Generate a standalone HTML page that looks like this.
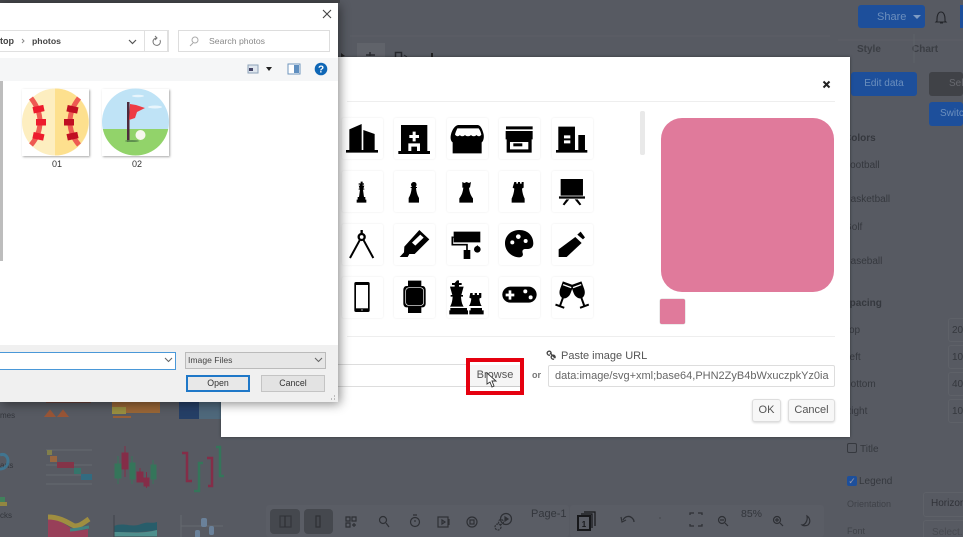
<!DOCTYPE html>
<html><head><meta charset="utf-8"><style>
html,body{margin:0;padding:0}
body{width:963px;height:537px;overflow:hidden;position:relative;background:#575a62;font-family:"Liberation Sans",sans-serif}
.a{position:absolute;white-space:nowrap;box-sizing:border-box}
#wrap{position:absolute;left:0;top:0;width:963px;height:537px;overflow:hidden;filter:blur(.35px)}
.bg{color:#35383e;font-size:10px}
.cell{position:absolute;width:41px;height:41px;background:#fff;border-radius:2px;box-shadow:0 0 2px rgba(0,0,0,.08)}
.btn{position:absolute;box-sizing:border-box;background:#f7f7f7;border:1px solid #ddd;border-radius:3px;box-shadow:0 1px 2px rgba(0,0,0,.15);color:#555;font-size:11px;text-align:center}
</style></head><body><div id="wrap">

<!-- background app -->
<div class="a" style="left:858px;top:5px;width:67px;height:23px;background:#1d4f9b;border-radius:3px;color:#6c8fbd;font-size:11px;line-height:24px;padding-left:19px">Share</div>
<div class="a" style="left:913px;top:15px;width:0;height:0;border:4px solid transparent;border-top-color:#7e9cc4"></div>
<div class="a" style="left:960px;top:5px;width:3px;height:23px;background:#1d4f9b"></div>
<div class="a bg" style="left:857px;top:44px;font-weight:bold;color:#3b3e44">Style</div>
<div class="a bg" style="left:912px;top:44px;font-weight:bold;color:#3b3e44">Chart</div>
<div class="a" style="left:851px;top:72px;width:66px;height:24px;background:#1d4f9b;border-radius:3px;color:#6c8fbd;font-size:10px;line-height:24px;text-align:center">Edit data</div>
<div class="a" style="left:929px;top:72px;width:34px;height:24px;background:#404247;border-radius:3px;color:#686a70;font-size:10px;line-height:24px;padding-left:20px">Sel</div>
<div class="a" style="left:929px;top:102px;width:34px;height:24px;background:#1d4f9b;border-radius:3px;color:#6c8fbd;font-size:10px;line-height:24px;padding-left:11px">Switch</div>
<div class="a bg" style="left:844px;top:133px;font-weight:bold">Colors</div>
<div class="a bg" style="left:844px;top:160px">Football</div>
<div class="a bg" style="left:844px;top:194px">Basketball</div>
<div class="a bg" style="left:844px;top:222px">Golf</div>
<div class="a bg" style="left:844px;top:256px">Baseball</div>
<div class="a bg" style="left:843px;top:298px;font-weight:bold">Spacing</div>
<div class="a bg" style="left:844px;top:325px">Top</div>
<div class="a bg" style="left:844px;top:352px">Left</div>
<div class="a bg" style="left:844px;top:379px">Bottom</div>
<div class="a bg" style="left:844px;top:406px">Right</div>
<div class="a bg" style="left:952px;top:325px">20</div>
<div class="a bg" style="left:952px;top:352px">10</div>
<div class="a bg" style="left:952px;top:379px">40</div>
<div class="a bg" style="left:952px;top:406px">10</div>
<div class="a" style="left:948px;top:318px;width:20px;height:24px;border:1px solid #5e6168;border-radius:3px"></div>
<div class="a" style="left:948px;top:345px;width:20px;height:24px;border:1px solid #5e6168;border-radius:3px"></div>
<div class="a" style="left:948px;top:372px;width:20px;height:24px;border:1px solid #5e6168;border-radius:3px"></div>
<div class="a" style="left:948px;top:399px;width:20px;height:24px;border:1px solid #5e6168;border-radius:3px"></div>
<div class="a" style="left:847px;top:443px;width:10px;height:10px;border:1px solid #36393f;border-radius:2px"></div>
<div class="a bg" style="left:860px;top:444px">Title</div>
<div class="a" style="left:847px;top:476px;width:10px;height:10px;background:#1d4f9b;border-radius:2px;color:#99a;font-size:9px;line-height:10px;text-align:center">✓</div>
<div class="a bg" style="left:859px;top:476px">Legend</div>
<div class="a bg" style="left:847px;top:499px;color:#3f4248;font-size:9px">Orientation</div>
<div class="a bg" style="left:931px;top:498px;color:#303238">Horizontal</div>
<div class="a bg" style="left:847px;top:526px;color:#3f4248;font-size:9px">Font</div>
<div class="a bg" style="left:932px;top:527px;color:#474a50">Select...</div>
<div class="a" style="left:923px;top:492px;width:50px;height:25px;border:1px solid #5e6168;border-radius:3px"></div>
<div class="a" style="left:923px;top:520px;width:50px;height:25px;border:1px solid #5e6168;border-radius:3px"></div>
<div class="a bg" style="left:0;top:411px;color:#33363c;font-size:8px">mes</div>
<div class="a bg" style="left:0;top:461px;color:#33363c;font-size:8px">arts</div>
<div class="a bg" style="left:0;top:511px;color:#33363c;font-size:8px">cks</div>
<div class="a" style="left:266px;top:505px;width:303px;height:32px;background:#5a5d65;border-radius:3px"></div>
<div class="a" style="left:570px;top:505px;width:254px;height:32px;background:#5a5d65;border-radius:3px"></div>
<div class="a" style="left:270px;top:509px;width:30px;height:25px;background:#45484e;border-radius:4px"></div>
<div class="a" style="left:304px;top:509px;width:29px;height:25px;background:#45484e;border-radius:4px"></div>
<div class="a" style="left:531px;top:508px;font-size:11px;color:#33363c">Page-1</div>
<div class="a" style="left:741px;top:508px;font-size:10.5px;color:#33363c">85%</div>

<svg class="a" style="left:0;top:0" width="963" height="537" viewBox="0 0 963 537">
 <!-- bell -->
 <path d="M937 21v-2c0-3 1-7 4-7s4 4 4 7v2l1 1h-10z" fill="none" stroke="#23252a" stroke-width="1.1"/><path d="M940 23h3" stroke="#23252a"/>
 <path d="M350 36H830M838 40H963" stroke="#5e6168" stroke-width="1" opacity=".7"/>
 <path d="M914 34v29" stroke="#5e6168"/>
 <!-- top toolbar bits -->
 <rect x="357" y="43" width="28" height="14" fill="#60636a"/>
 <path d="M366 55h9M370 52v4" stroke="#2a2c31" stroke-width="1.5"/>
 <path d="M341 57v-4l4 3z" fill="#222"/>
 <rect x="395.500" y="52.500" width="6" height="6" fill="none" stroke="#26282d" stroke-width="1.500"/><path d="M404 55l3 2" stroke="#26282d"/>
 <rect x="431" y="53" width="2" height="5" fill="#222"/>
 <!-- chart thumbnails -->
 <g opacity=".82">
  <path d="M46 416l4-5 4 5zM59 416l4-5 4 5z" fill="#a8552e" stroke="#a8552e" stroke-width="2"/>
  <rect x="46" y="401" width="45" height="2" fill="#6b3d33"/>
  <rect x="112" y="400" width="48" height="13" fill="#a86a2e"/><rect x="112" y="407" width="14" height="7" fill="#a89a3a"/><rect x="113" y="416" width="18" height="2" fill="#a8602e"/>
  <rect x="179" y="401" width="20" height="18" fill="#1c3a68"/><rect x="199" y="401" width="22" height="18" fill="#4e6c82"/>
  <path d="M46 450h46M46 465h46M46 475h46M46 484h46" stroke="#6a6d74"/>
  <rect x="47" y="450" width="5" height="5" fill="#8c8848"/><rect x="50" y="456" width="7" height="6" fill="#a8693a"/><rect x="57" y="462" width="17" height="6" fill="#8f2d44"/><rect x="74" y="468" width="7" height="6" fill="#2f7c6e"/><rect x="81" y="474" width="11" height="6" fill="#2b6f88"/>
  <g fill="#8f2444" stroke="#8f2444"><path d="M125 446v31" /><rect x="122" y="453" width="6" height="16"/><rect x="137" y="472" width="6" height="10"/><path d="M140 468v14"/><rect x="144" y="478" width="5" height="8"/><path d="M146.500 472v16"/></g>
  <g fill="#2f7c5a" stroke="#2f7c5a"><path d="M118 456v28M132 456v28M153 460v24"/><rect x="115" y="464" width="6" height="14"/><rect x="130" y="463" width="5" height="16"/><rect x="151" y="465" width="5" height="14"/></g>
  <path d="M182 453h5v28h5M207 458h5v28h-4" fill="none" stroke="#8f2444" stroke-width="2.5"/><path d="M203 463h-4v28h-5M216 447h4v29h4" fill="none" stroke="#2f7c5a" stroke-width="2.5"/>
  <path d="M48 519c20 0 20 16 40 10v20H48z" fill="#a83a58"/><path d="M48 517c15 0 24 9 27 9 5 0 8-3 14-7" fill="none" stroke="#b09a3a" stroke-width="5"/><path d="M70 530c6 0 12-2 19-3" fill="none" stroke="#3f8d88" stroke-width="3"/>
  <path d="M114 526c10-4 18 2 27-2 8-3 10 0 16-2v8c-16 3-28 2-43 2z" fill="#1f5f6d"/><path d="M114 532c15 0 28 2 43-2v8h-43z" fill="#4d9b98"/><path d="M114 515v22M114 537h43" stroke="#3b3f45"/>
  <path d="M181 515v22M181 526h42" stroke="#6a6d74"/><rect x="201" y="518" width="6" height="9" rx="2" fill="#6f8aa8"/><rect x="209" y="526" width="5" height="9" rx="2" fill="#6f8aa8"/><rect x="195" y="530" width="5" height="8" rx="2" fill="#6f8aa8"/>
  <path d="M0 455c5-2 8 2 8 6s-3 8-8 8" fill="none" stroke="#3d7c9c" stroke-width="3"/><rect x="0" y="497" width="5" height="5" fill="#3e8a5c"/><rect x="0" y="502" width="7" height="4" fill="#a0913b"/>
 </g>
 <!-- bottom toolbar icons -->
 <g fill="none" stroke="#2e3035" stroke-width="1.2">
  <rect x="280" y="516" width="11" height="11" stroke="#33363b"/><path d="M285 516v11"/><rect x="316" y="516" width="4" height="11"/>
  <path d="M346 517h4v4h-4zM352 517h4v4h-4zM346 523h4v4h-4zM352 525h4M354 523v4"/>
  <circle cx="383" cy="520" r="3.5"/><path d="M386 523l3 4"/>
  <circle cx="415" cy="522" r="4.5"/><path d="M413 515h4M415 520v2"/>
  <rect x="438" y="517" width="10" height="10"/><path d="M442 520l3 2-3 2z"/><path d="M449 519v6"/>
  <circle cx="472" cy="522" r="5"/><rect x="470" y="520" width="4" height="4"/>
  <circle cx="506" cy="519" r="5.5"/><path d="M505 517l3 2-3 2z" fill="#2e3035"/><circle cx="498" cy="527" r="3" stroke-dasharray="2 1"/><circle cx="501" cy="522" r="2.5" stroke-dasharray="2 1"/>
  <rect x="578" y="516" width="12" height="14" stroke-width="2" stroke="#17181b"/><path d="M581 514h11v14M584 512h11v14" stroke="#17181b"/>
  <path d="M623 520c2-4 7-5 10-1 1 1 1 3 1 3" stroke-width="1.3"/><path d="M621 517l1 5 4-2" />
  <path d="M690 515v-2h4M698 513h4v2M690 524v2h4M698 526h4v-2" stroke-width="1.3"/>
  <circle cx="722" cy="520" r="3.5"/><path d="M725 523l3 3M720 520h4"/>
  <circle cx="777" cy="520" r="3.5"/><path d="M780 523l3 3M775 520h4M777 518v4"/>
  <path d="M807 516c3 2 4 6 1 9-2 1-5 1-6 0 3 0 6-4 5-9z"/>
 </g>
 <text x="584" y="527" font-size="8" font-weight="bold" text-anchor="middle" fill="#17181b" font-family="Liberation Sans">1</text>
 <rect x="659" y="517" width="2" height="2" fill="#4f5258"/>
</svg>

<!-- modal -->
<div class="a" style="left:221px;top:57px;width:629px;height:380px;background:#fff;box-shadow:0 0 3px rgba(0,0,0,.4)"></div>
<div class="a" style="left:347px;top:101px;width:488px;height:1px;background:#eee"></div>
<div class="a" style="left:347px;top:336px;width:488px;height:1px;background:#eee"></div>
<div class="a" style="left:640px;top:111px;width:5px;height:44px;background:#e9e9e9;border-radius:2px"></div>
<div class="a" style="left:661px;top:118px;width:173px;height:174px;background:#e07a9b;border-radius:21px"></div>
<div class="a" style="left:660px;top:299px;width:25px;height:25px;background:#e07a9b;border-radius:2px;box-shadow:0 0 1px #888"></div>

<div class="cell" style="left:342px;top:118px"></div><div class="cell" style="left:394px;top:118px"></div><div class="cell" style="left:447px;top:118px"></div><div class="cell" style="left:499px;top:118px"></div><div class="cell" style="left:552px;top:118px"></div>
<div class="cell" style="left:342px;top:171px"></div><div class="cell" style="left:394px;top:171px"></div><div class="cell" style="left:447px;top:171px"></div><div class="cell" style="left:499px;top:171px"></div><div class="cell" style="left:552px;top:171px"></div>
<div class="cell" style="left:342px;top:224px"></div><div class="cell" style="left:394px;top:224px"></div><div class="cell" style="left:447px;top:224px"></div><div class="cell" style="left:499px;top:224px"></div><div class="cell" style="left:552px;top:224px"></div>
<div class="cell" style="left:342px;top:277px"></div><div class="cell" style="left:394px;top:277px"></div><div class="cell" style="left:447px;top:277px"></div><div class="cell" style="left:499px;top:277px"></div><div class="cell" style="left:552px;top:277px"></div>

<svg class="a" style="left:0;top:0" width="963" height="537" viewBox="0 0 963 537">
<g transform="translate(340 110) scale(.3333)" fill="#000">
 <!-- row 1 -->
 <path d="M18 120h10V58l37-16v78h5V60l34 12v48h10v8H18z"/>
 <path d="M183 45h79v78h8v9h-95v-9h8z"/><path d="M218 65h9v10h10v9h-10v10h-9V84h-10v-9h10zM205 100h35v23h-9v-13h-17v13h-9z" fill="#fff"/>
 <path d="M355 45h58c8 0 14 12 18 28 2 12-2 22-6 24v33h-87V97c-5-3-8-12-5-24 4-16 14-28 22-28z"/><path d="M352 55h64c5 6 7 14 8 19-3 6-10 6-15 1-3 5-12 5-16 0-4 5-14 5-18 0-4 5-13 5-15 0-4 5-11 5-15-1 1-5 4-13 7-19z" fill="#fff"/>
 <path d="M498 49h80v9h-80zM497 63h81v25h-3v40h-75V88h-3z"/><path d="M510 96h55v22h-55z" fill="#fff"/><path d="M520 100h27v9h-27z"/>
 <path d="M655 50h50v70h10V75h20v45h7v8h-94v-8h7z"/><path d="M672 76h19v9h-19zM672 91h19v9h-19z" fill="#fff"/>
 <!-- row 2 -->
 <path d="M62 215h6v5h4v4h-4v3h5l-3 9h3v3h-4l3 22h4v8h3v9H50v-9h3v-8h4l3-22h-4v-3h3l-3-9h4v-3h-4v-4h6z"/>
 <path d="M222 216a8 8 0 0 1 6 13l-1 2h4v3h-3c1 12 4 22 9 30v14h-31v-14c5-8 8-18 9-30h-3v-3h4l-1-2a8 8 0 0 1 7-13z"/>
 <path d="M367 216l6 3 7-3 7 3 6-3-3 17h-3c1 12 5 24 12 32v13h-41v-13c7-8 11-20 12-32h-3z"/>
 <path d="M523 216h6v5h5v-5h6v5h5v-5h6v17l-5 3c1 12 4 22 8 30v12h-39v-12c4-8 7-18 8-30l-5-3z"/>
 <path d="M662 207h67v50h-67zM657 259h78v7h-78zM688 268l-15 18-5-3 11-15zM704 268l15 18 5-3-11-15z"/>
 <!-- row 3: compass -->
 <g fill="none" stroke="#000"><circle cx="65" cy="381" r="9" stroke-width="7"/><path d="M65 360v10" stroke-width="7"/><path d="M59 391L30 444M71 391l29 53" stroke-width="6"/></g>
 <!-- highlighter -->
 <path d="M238 360l30 28-44 44h-16l-5 9h-24l13-14 1-17z"/><path d="M241 374l10 9-25 24-10-9z" fill="#fff"/>
 <!-- roller -->
 <path d="M341 365h80v32h-80z"/><path d="M341 382h-4v22h44v16" fill="none" stroke="#000" stroke-width="5"/><rect x="371" y="420" width="20" height="27"/><circle cx="412" cy="418" r="10"/><path d="M412 405l5 8h-10z"/>
 <!-- palette -->
 <path d="M538 360c26 0 42 18 42 40 0 16-14 18-24 17-8 0-10 6-8 12 3 8-3 13-10 13-22 0-43-18-43-42s19-40 43-40z"/><circle cx="535" cy="380" r="7" fill="#fff"/><circle cx="557" cy="393" r="6" fill="#fff"/><circle cx="517" cy="397" r="6" fill="#fff"/>
 <!-- pencil -->
 <path d="M706 381l19 18-45 42h-24v-23z"/><path d="M722 365l13 17-6 6-17-14z"/>
 <!-- row 4 -->
 <rect x="43" y="516" width="46" height="90" rx="5"/><rect x="48" y="525" width="36" height="70" fill="#fff"/><circle cx="66" cy="600" r="2" fill="#fff"/>
 <path d="M204 512h40v16h4c6 0 9 6 9 12v40c0 8-4 12-10 12h-3v17h-40v-17h-4c-6 0-10-5-10-12v-40c0-7 4-12 10-12h4z"/><rect x="197" y="533" width="54" height="54" rx="10" fill="none" stroke="#fff" stroke-width="2"/>
 <path d="M351 511h6v8h8v6h-8v5h14l-7 25h5v5h-6c1 13 3 23 8 30h-41c5-7 7-17 8-30h-6v-5h5l-7-25h14v-5h-8v-6h8zM331 594h50v7h3v12h-56v-12h3z"/>
 <path d="M391 549h7v6h6v-6h7v6h6v-6h7v14l-6 3c1 9 3 17 7 22h-38c4-5 6-13 7-22l-6-3zM392 594h34v7h5v12h-43v-12h4z"/>
 <rect x="487" y="530" width="103" height="48" rx="24"/><path d="M506 541h8v10h9v8h-9v10h-8v-10h-9v-8h9z" fill="#fff"/><circle cx="556" cy="544" r="6" fill="#fff"/><circle cx="572" cy="562" r="6" fill="#fff"/>
 <!-- cheers -->
 <g transform="translate(673 552) rotate(20)"><path d="M-17-34H17V-10C17 5 8 12 3 13V36H14V42H-14V36H-3V13C-8 12-17 5-17-10Z"/><path d="M-13-27H13V-23H-13Z" fill="#fff"/></g>
 <g transform="translate(720 552) rotate(-20)"><path d="M-17-34H17V-10C17 5 8 12 3 13V36H14V42H-14V36H-3V13C-8 12-17 5-17-10Z"/><path d="M-13-27H13V-23H-13Z" fill="#fff"/></g>
</g>
<!-- modal close -->
<path d="M823.5 81.5l6 6M829.5 81.5l-6 6" stroke="#222" stroke-width="2"/>
</svg>

<!-- browse row -->
<div class="a" style="left:338px;top:364px;width:132px;height:23px;border-top:1px solid #ddd;border-bottom:1px solid #ddd;background:#fff"></div>
<div class="a" style="left:470px;top:365px;width:50px;height:22px;background:#f5f5f5;border-bottom:1px solid #ccc;color:#555;font-size:11px;line-height:21px;text-align:center">Browse</div>
<div class="a" style="left:466px;top:358px;width:58px;height:37px;border:4px solid #e5000f"></div>
<div class="a" style="left:532px;top:370px;font-size:9px;color:#777;font-weight:bold">or</div>
<div class="a" style="left:561px;top:350px;font-size:11px;color:#555">Paste image URL</div>
<div class="a" style="left:548px;top:365px;width:287px;height:22px;border:1px solid #ddd;border-radius:2px"></div>
<div class="a" style="left:555px;top:366px;width:274px;height:20px;font-size:11px;line-height:20px;color:#666;overflow:hidden">data:image/svg+xml;base64,PHN2ZyB4bWxuczpkYz0iaHF</div>
<div class="btn" style="left:752px;top:399px;width:29px;height:23px;line-height:21px">OK</div>
<div class="btn" style="left:788px;top:399px;width:47px;height:23px;line-height:21px">Cancel</div>
<svg class="a" style="left:0;top:0" width="963" height="537" viewBox="0 0 963 537">
 <path d="M550 353l5 5M551 354a2 2 0 1 0-1 1M555 358a2 2 0 1 0-1 1" fill="none" stroke="#444" stroke-width="1.3"/>
 <path d="M487 373v11l3-2 2 5 2-1-2-5h4z" fill="#fff" stroke="#333" stroke-width=".9"/>
</svg>

<!-- file dialog -->
<div class="a" style="left:0;top:0;width:340px;height:3px;background:#45464a"></div>
<div class="a" style="left:0;top:3px;width:338px;height:399px;background:#fff;box-shadow:2px 2px 10px rgba(0,0,0,.45)"></div>
<div class="a" style="left:0;top:58px;width:338px;height:23px;background:#f5f6f7"></div>
<div class="a" style="left:0;top:81px;width:3px;height:180px;background:#bdbdbd"></div>
<div class="a" style="left:0;top:345px;width:338px;height:57px;background:#f0f0f0"></div>
<div class="a" style="left:-2px;top:30px;width:170px;height:22px;background:#fff;border:1px solid #e0e0e0"></div>
<div class="a" style="left:144px;top:30px;width:25px;height:22px;border-left:1px solid #e0e0e0;border-right:1px solid #e0e0e0"></div>
<div class="a" style="left:178px;top:30px;width:152px;height:22px;background:#fff;border:1px solid #ddd"></div>
<div class="a" style="left:0;top:36px;font-size:9px;color:#444;font-weight:bold">top</div>
<div class="a" style="left:32px;top:36px;font-size:8.7px;color:#444;font-weight:bold">photos</div>
<div class="a" style="left:209px;top:36px;font-size:8.7px;color:#888">Search photos</div>
<div class="a" style="left:52px;top:159px;font-size:9px;color:#333">01</div>
<div class="a" style="left:132px;top:159px;font-size:9px;color:#333">02</div>
<div class="a" style="left:-2px;top:352px;width:178px;height:18px;background:#fff;border:1px solid #4a98d8"></div>
<div class="a" style="left:185px;top:352px;width:141px;height:17px;background:#e6e6e6;border:1px solid #bbb;font-size:8.6px;line-height:15px;padding-left:2px;color:#444">Image Files</div>
<div class="a" style="left:186px;top:375px;width:64px;height:17px;background:#e8e8e8;border:2px solid #1f78c8;font-size:8.8px;line-height:13px;text-align:center;color:#333">Open</div>
<div class="a" style="left:261px;top:375px;width:64px;height:17px;background:#e3e3e3;border:1px solid #c4c4c4;font-size:8.8px;line-height:15px;text-align:center;color:#333">Cancel</div>

<svg class="a" style="left:0;top:0" width="963" height="537" viewBox="0 0 963 537">
 <path d="M323 10l8 8M331 10l-8 8" stroke="#444" stroke-width="1.1"/>
 <path d="M22 39l2 2 -2 2" fill="none" stroke="#888"/>
 <path d="M129 40l3.5 3.5L136 40" fill="none" stroke="#555" stroke-width="1.2"/>
 <path d="M160 40a3.7 3.7 0 1 1-3-2M155 36l2 2-2 2" fill="none" stroke="#777"/>
 <circle cx="195" cy="40" r="3" fill="none" stroke="#aaa"/><path d="M193 43l-3 3" stroke="#aaa"/>
 <rect x="248" y="65" width="10" height="8" fill="#dfe6ee" stroke="#8da3b8"/><rect x="249" y="68" width="4" height="3" fill="#446"/>
 <path d="M266 67h6l-3 4z" fill="#222"/>
 <rect x="288" y="64" width="12" height="10" fill="#fff" stroke="#6f96bd"/><rect x="294" y="65" width="5" height="8" fill="#5f8fc0"/>
 <circle cx="321" cy="69" r="6.3" fill="#0f67b6"/><text x="321" y="72.5" font-size="10" font-weight="bold" text-anchor="middle" fill="#fff" font-family="Liberation Sans">?</text>
 <!-- thumbnails -->
 <rect x="22" y="89" width="67" height="67" fill="#fff" style="filter:drop-shadow(1px 1px 1px rgba(0,0,0,.35))"/>
 <rect x="102" y="89" width="67" height="67" fill="#fff" style="filter:drop-shadow(1px 1px 1px rgba(0,0,0,.35))"/>
 <circle cx="55.5" cy="122" r="33.5" fill="#fdeec0"/>
 <path d="M55 88.5a33.5 33.5 0 0 1 0 67z" fill="#fde08e"/>
 <path d="M31 98c6 8 9 15 9 24s-3 16-9 23M79 98c-6 8-9 15-9 24s3 16 9 23" fill="none" stroke="#ee5a52" stroke-width="5"/>
 <g fill="#ed1b2d"><rect x="33" y="106" width="11" height="6.500" transform="rotate(-12 38 109)"/><rect x="36" y="119" width="10" height="6.500"/><rect x="33" y="133" width="11" height="6.500" transform="rotate(12 38 136)"/></g>
 <g fill="#c00f22"><rect x="67" y="106" width="11" height="6.500" transform="rotate(12 72 109)"/><rect x="64" y="119" width="10" height="6.500"/><rect x="67" y="133" width="11" height="6.500" transform="rotate(-12 72 136)"/></g>
 <clipPath id="c"><circle cx="135.5" cy="122" r="33.5"/></clipPath>
 <g clip-path="url(#c)"><rect x="102" y="88" width="67" height="41" fill="#bfe3f6"/><rect x="102" y="129" width="67" height="27" fill="#92d36a"/></g>
 <ellipse cx="155" cy="107" rx="7" ry="1.5" fill="#e8f5fc"/><ellipse cx="138" cy="96" rx="6" ry="1.2" fill="#e8f5fc"/>
 <rect x="127" y="102" width="2.500" height="40" fill="#4d2a3c"/>
 <ellipse cx="132" cy="141" rx="7" ry="1" fill="#5e8f4e"/>
 <path d="M130 104l6 1 9 3-8 4-2 6-6 2z" fill="#ee3b44"/>
 <circle cx="140.500" cy="135" r="5" fill="#f7f7ee"/>
 <path d="M165 358l3.500 3.500L172 358M315 358l3.500 3.500L322 358" fill="none" stroke="#666" stroke-width="1.1"/>
 <path d="M334 399h1M331 399h1M334 396h1" stroke="#aaa" stroke-width="1.500"/>
</svg>

</div></body></html>
